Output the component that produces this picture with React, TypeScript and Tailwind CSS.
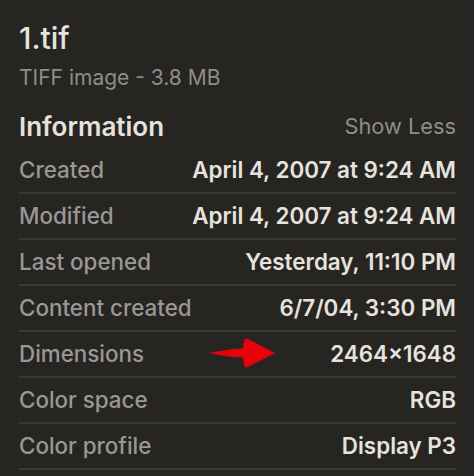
import React from 'react';

const rows: [string, string][] = [
  ['Created', 'April 4, 2007 at 9:24 AM'],
  ['Modified', 'April 4, 2007 at 9:24 AM'],
  ['Last opened', 'Yesterday, 11:10 PM'],
  ['Content created', '6/7/04, 3:30 PM'],
  ['Dimensions', '2464×1648'],
  ['Color space', 'RGB'],
  ['Color profile', 'Display P3'],
];

// red pointer arrow drawn over the Dimensions row
const Arrow = () => (
  <svg width="70" height="34" viewBox="0 0 70 34" className="absolute left-[188px] top-[4px]">
    <path d="M2 17 Q20 13 36 12.5 L37 5 Q38 1.5 42 3.5 L68 17 L42 30.5 Q38 32.5 37 29 L36 21.5 Q20 21 2 17 Z" fill="#e8000b" />
  </svg>
);

const App: React.FC = () => {
  return (
    <div className="w-[474px] h-[476px] overflow-hidden bg-[#262522] px-[19px] pt-[20px]" style={{ fontFamily: 'Inter, "Noto Sans", sans-serif' }}>
      <div className="mr-[-1px]">
        <h1 className="text-[30px] leading-[36px] font-medium text-[#e6e3de]">1.tif</h1>
        <p className="text-[21px] leading-[28px] mt-[8px] text-[#8f8d89]">TIFF image - 3.8 MB</p>
        <div className="flex items-center justify-between mt-[18px] h-[32px]">
          <h2 className="text-[26px] font-semibold text-[#e6e3de]">Information</h2>
          <span className="text-[21.8px] text-[#8f8d89]">Show Less</span>
        </div>
        <div className="mt-[6px]">
          {rows.map(([k, v]) => (
            <div key={k} className="relative flex items-center justify-between h-[46px] border-b-2 border-[#3a3936]">
              <span className="text-[22.4px] font-medium text-[#9a9894]">{k}</span>
              <span className="text-[22.4px] font-semibold text-[#e6e3de]">{v}</span>
              {k === 'Dimensions' && <Arrow />}
            </div>
          ))}
        </div>
      </div>
    </div>
  );
};

export default App;
